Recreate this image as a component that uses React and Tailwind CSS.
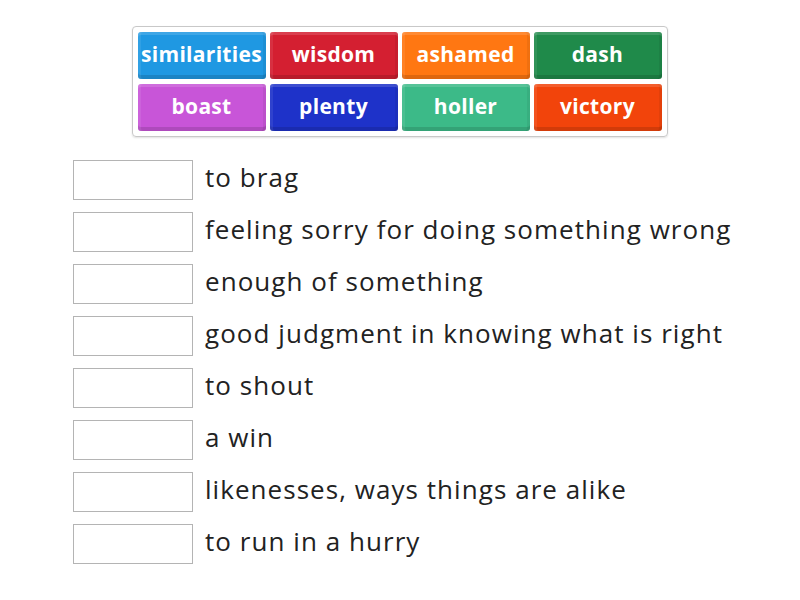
import React from 'react';

const tiles = [
  { word: 'similarities', bg: 'bg-[#1f98e2]' },
  { word: 'wisdom', bg: 'bg-[#d41f31]' },
  { word: 'ashamed', bg: 'bg-[#ff7712]' },
  { word: 'dash', bg: 'bg-[#1f8a4a]' },
  { word: 'boast', bg: 'bg-[#c855d8]' },
  { word: 'plenty', bg: 'bg-[#1e32c9]' },
  { word: 'holler', bg: 'bg-[#3cba88]' },
  { word: 'victory', bg: 'bg-[#f2440b]' },
];

const clues = [
  'to brag',
  'feeling sorry for doing something wrong',
  'enough of something',
  'good judgment in knowing what is right',
  'to shout',
  'a win',
  'likenesses, ways things are alike',
  'to run in a hurry',
];

export default function App() {
  return (
    <div className="w-[800px] h-[600px] bg-white font-['Open_Sans',sans-serif] text-[#222]">
      {/* Word tiles */}
      <div className="pt-[26px] flex justify-center">
        <div className="ml-[-1px] border border-[#c8c8c8] rounded-[4px] p-[5px] grid grid-cols-[repeat(4,128px)] gap-x-[4px] gap-y-[5px] shadow-[0_1px_2px_rgba(0,0,0,0.12)]">
          {tiles.map((t) => (
            <div
              key={t.word}
              className={`${t.bg} h-[47px] rounded-[3px] flex items-center justify-center text-white font-bold text-[21px] tracking-[0.3px] leading-none pb-[3px] shadow-[inset_0_3px_0_rgba(255,255,255,0.14),inset_3px_0_0_rgba(255,255,255,0.08),inset_0_-4px_0_rgba(0,0,0,0.13),inset_-3px_0_0_rgba(0,0,0,0.06)]`}
            >
              {t.word}
            </div>
          ))}
        </div>
      </div>

      {/* Clues */}
      <div className="mt-[23px] pl-[73px] flex flex-col gap-[12px]">
        {clues.map((c) => (
          <div key={c} className="flex items-center h-[40px]">
            <div className="w-[120px] h-[40px] border border-[#b4b4b4] bg-white shrink-0" />
            <span className="ml-[12px] text-[26px] tracking-[1.05px] leading-none whitespace-nowrap pb-[7px]">{c}</span>
          </div>
        ))}
      </div>
    </div>
  );
}
